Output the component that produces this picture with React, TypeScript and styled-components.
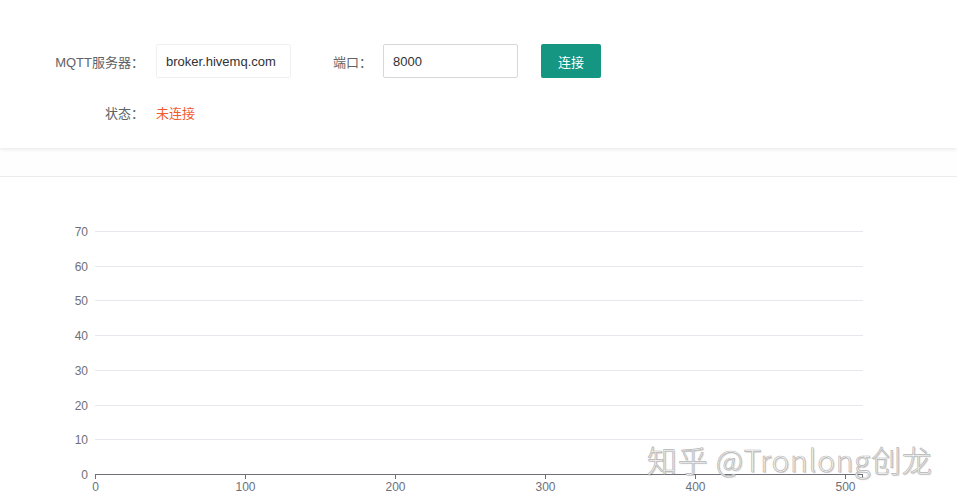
import React from 'react';
import styled, { createGlobalStyle } from 'styled-components';

const GlobalStyle = createGlobalStyle`
  html, body {
    margin: 0;
    padding: 0;
    background: #ffffff;
    font-family: "Liberation Sans", "Noto Sans CJK SC", sans-serif;
  }
`;

const Page = styled.div`
  position: relative;
  width: 957px;
  height: 502px;
  overflow: hidden;
  background: #ffffff;
`;

const ConfigCard = styled.div`
  display: flex;
  flex-direction: column;
  gap: 17px;
  padding: 44px 0 19px;
  background: #ffffff;
  box-shadow: 0 2px 3px rgba(0, 0, 0, 0.07);
  position: relative;
  z-index: 1;
`;

const FormRow = styled.div`
  display: flex;
  align-items: center;
  height: 34px;
`;

const Label = styled.label`
  width: 156px;
  padding-right: 12px;
  box-sizing: border-box;
  text-align: right;
  font-size: 13px;
  color: #606266;
  white-space: nowrap;
`;

const FieldLabel = styled(Label)`
  width: auto;
  margin-left: 42px;
  padding-right: 11px;
`;

const TextInput = styled.input<{ light?: boolean }>`
  width: 135px;
  height: 34px;
  box-sizing: border-box;
  padding: 0 9px;
  border: 1px solid ${({ light }) => (light ? '#f0f0f0' : '#d6d8dc')};
  border-radius: 2px;
  font-family: inherit;
  font-size: 13px;
  color: #303133;
  outline: none;
  background: #fff;
`;

const ConnectButton = styled.button`
  margin-left: 23px;
  width: 60px;
  height: 34px;
  border: none;
  border-radius: 2px;
  background: #149683;
  color: #ffffff;
  font-family: inherit;
  font-size: 13px;
  cursor: pointer;
`;

const StatusText = styled.span`
  font-size: 13px;
  color: #f2592b;
`;

const Divider = styled.div`
  height: 26px;
  background: #fefefe;
  border-bottom: 1px solid #ececec;
  margin-top: 2px;
`;

const ChartArea = styled.div`
  display: block;
  svg {
    display: block;
  }
`;

const Watermark = styled.div`
  position: absolute;
  left: 647px;
  top: 444px;
  font-family: "Noto Sans CJK SC", "Noto Sans", sans-serif;
  font-size: 30px;
  line-height: 30px;
  font-weight: 300;
  color: #fcfcfc;
  -webkit-text-stroke: 0.7px #b4b4b4;
  text-shadow: 1px 1px 1px rgba(0, 0, 0, 0.22);
  white-space: nowrap;
  letter-spacing: 0.7px;
`;

const yTicks = [0, 10, 20, 30, 40, 50, 60, 70];
const xTicks = [0, 100, 200, 300, 400, 500];

const GRID_LEFT = 95;
const GRID_RIGHT = 863;
const ZERO_Y = 297;
const STEP_Y = 34.71;
const STEP_X = 1.5;

function LineChart() {
  return (
    <svg width={957} height={325} viewBox="0 0 957 325">
      {yTicks.map((v) => {
        const y = Math.round(ZERO_Y - (v / 10) * STEP_Y) + 0.5;
        return (
          <g key={v}>
            {v !== 0 && <line x1={GRID_LEFT} x2={GRID_RIGHT} y1={y} y2={y} stroke="#e6e8ee" strokeWidth={1} />}
            <text
              x={88}
              y={y + 4}
              textAnchor="end"
              fontSize={12}
              fill="#6e7079"
              fontFamily='"Liberation Sans", "Noto Sans", sans-serif'
            >
              {v}
            </text>
          </g>
        );
      })}
      <line x1={GRID_LEFT} x2={GRID_RIGHT} y1={ZERO_Y + 0.5} y2={ZERO_Y + 0.5} stroke="#6e7079" strokeWidth={1} />
      {xTicks.map((v) => {
        const x = Math.round(GRID_LEFT + v * STEP_X) + 0.5;
        return (
          <g key={v}>
            <line x1={x} x2={x} y1={ZERO_Y} y2={ZERO_Y + 5} stroke="#6e7079" strokeWidth={1} />
            <text
              x={x}
              y={ZERO_Y + 17}
              textAnchor="middle"
              fontSize={12}
              fill="#6e7079"
              fontFamily='"Liberation Sans", "Noto Sans", sans-serif'
            >
              {v}
            </text>
          </g>
        );
      })}
      <line x1={GRID_RIGHT - 0.5} x2={GRID_RIGHT - 0.5} y1={ZERO_Y} y2={ZERO_Y + 5} stroke="#6e7079" strokeWidth={1} />
    </svg>
  );
}

export default function App() {
  return (
    <>
      <GlobalStyle />
      <Page>
        <ConfigCard>
          <FormRow>
            <Label>MQTT服务器：</Label>
            <TextInput light defaultValue="broker.hivemq.com" />
            <FieldLabel>端口：</FieldLabel>
            <TextInput defaultValue="8000" />
            <ConnectButton>连接</ConnectButton>
          </FormRow>
          <FormRow>
            <Label>状态：</Label>
            <StatusText>未连接</StatusText>
          </FormRow>
        </ConfigCard>
        <Divider />
        <ChartArea>
          <LineChart />
        </ChartArea>
        <Watermark>知乎 @Tronlong创龙</Watermark>
      </Page>
    </>
  );
}
